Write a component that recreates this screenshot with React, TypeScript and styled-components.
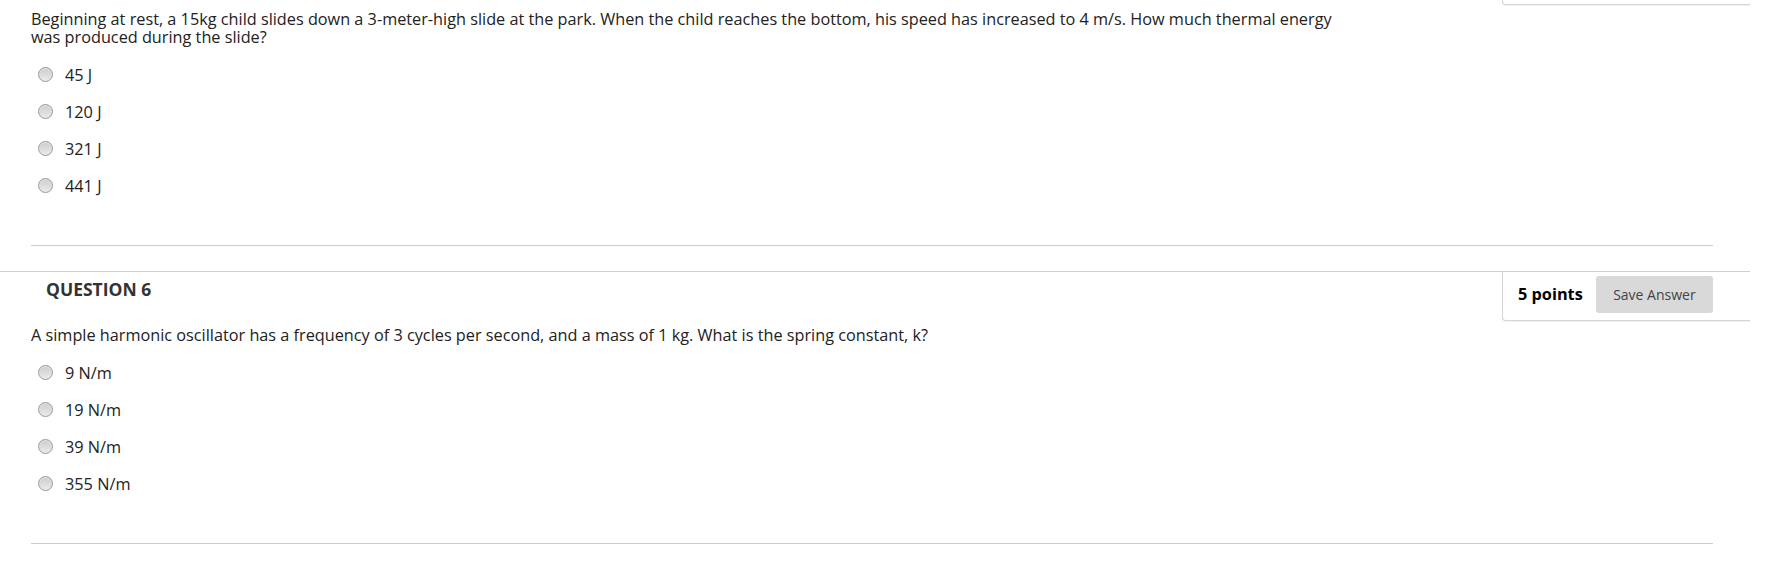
import React from 'react';
import styled, { createGlobalStyle } from 'styled-components';

const GlobalStyle = createGlobalStyle`
  html, body {
    margin: 0;
    padding: 0;
    background: #ffffff;
  }
  body {
    font-family: "Open Sans", "Liberation Sans", Arial, sans-serif;
    color: #222222;
  }
`;

interface QuestionData {
  number?: number;
  points?: number;
  text: string;
  options: string[];
}

const questions: QuestionData[] = [
  {
    text:
      'Beginning at rest, a 15kg child slides down a 3-meter-high slide at the park. When the child reaches the bottom, his speed has increased to 4 m/s. How much thermal energy was produced during the slide?',
    options: ['45 J', '120 J', '321 J', '441 J'],
  },
  {
    number: 6,
    points: 5,
    text:
      'A simple harmonic oscillator has a frequency of 3 cycles per second, and a mass of 1 kg. What is the spring constant, k?',
    options: ['9 N/m', '19 N/m', '39 N/m', '355 N/m'],
  },
];

const App = () => {
  return (
    <>
      <GlobalStyle />
      <Page>
        {questions.map((q, i) => (
          <Question key={i} data={q} />
        ))}
      </Page>
    </>
  );
};

const Question = ({ data }: { data: QuestionData }) => {
  const cut = data.number === undefined;
  return (
    <Block $cut={cut}>
      <Header $cut={cut}>
        {!cut && <Title>QUESTION {data.number}</Title>}
        <PointsBox $cut={cut}>
          {!cut && (
            <>
              <Points>{data.points} points</Points>
              <SaveButton>Save Answer</SaveButton>
            </>
          )}
        </PointsBox>
      </Header>
      <Body>
        <QuestionText>{data.text}</QuestionText>
        <Options>
          {data.options.map((o) => (
            <Option key={o}>
              <Radio />
              <OptionLabel>{o}</OptionLabel>
            </Option>
          ))}
        </Options>
        <Rule />
      </Body>
    </Block>
  );
};

const Page = styled.div`
  width: 1750px;
`;

const Block = styled.div<{ $cut: boolean }>`
  border-top: ${(p) => (p.$cut ? 'none' : '1px solid #d0d0d0')};
  padding-bottom: 25px;
`;

const Header = styled.div<{ $cut: boolean }>`
  display: flex;
  justify-content: space-between;
  align-items: flex-start;
  height: ${(p) => (p.$cut ? '5px' : '49px')};
  padding-left: 46px;
`;

const Title = styled.div`
  margin-top: 6px;
  font-size: 17.5px;
  line-height: 22px;
  font-weight: 700;
  color: #333333;
`;

const PointsBox = styled.div<{ $cut: boolean }>`
  margin-left: auto;
  box-sizing: border-box;
  width: 248px;
  height: 100%;
  display: flex;
  align-items: center;
  padding: ${(p) => (p.$cut ? '0' : '4px 37px 8px 15px')};
  border-left: 1px solid #d5d5d5;
  border-bottom: 1px solid #d5d5d5;
  border-bottom-left-radius: 4px;
  box-shadow: 0 1px 1px rgba(0, 0, 0, 0.06);
`;

const Points = styled.div`
  font-size: 16.3px;
  font-weight: 700;
  color: #000000;
  margin-right: 13px;
  white-space: nowrap;
`;

const SaveButton = styled.button`
  width: 119px;
  height: 37px;
  border: none;
  border-radius: 3px;
  background: #d9d9d9;
  color: #444444;
  font-family: "Open Sans", "Liberation Sans", Arial, sans-serif;
  font-size: 14px;
  padding: 0;
`;

const Body = styled.div`
  padding: 5px 37px 0 31px;
`;

const QuestionText = styled.div`
  max-width: 1320px;
  font-size: 16.25px;
  line-height: 18px;
  color: #222222;
`;

const Options = styled.div`
  padding: 10px 0 0 7px;
  display: flex;
  flex-direction: column;
`;

const Option = styled.label`
  height: 37px;
  display: flex;
  align-items: center;
  gap: 12px;
`;

const Radio = styled.span`
  box-sizing: border-box;
  width: 15px;
  height: 15px;
  border-radius: 50%;
  border: 1px solid #999999;
  background: linear-gradient(to bottom, #cccccc, #ebebeb);
  box-shadow: inset 0 1px 1px rgba(255, 255, 255, 0.5);
  flex-shrink: 0;
`;

const OptionLabel = styled.span`
  font-size: 16.3px;
  line-height: 18px;
  color: #222222;
`;

const Rule = styled.div`
  margin-top: 41px;
  height: 1px;
  background: #cccccc;
`;

export default App;
